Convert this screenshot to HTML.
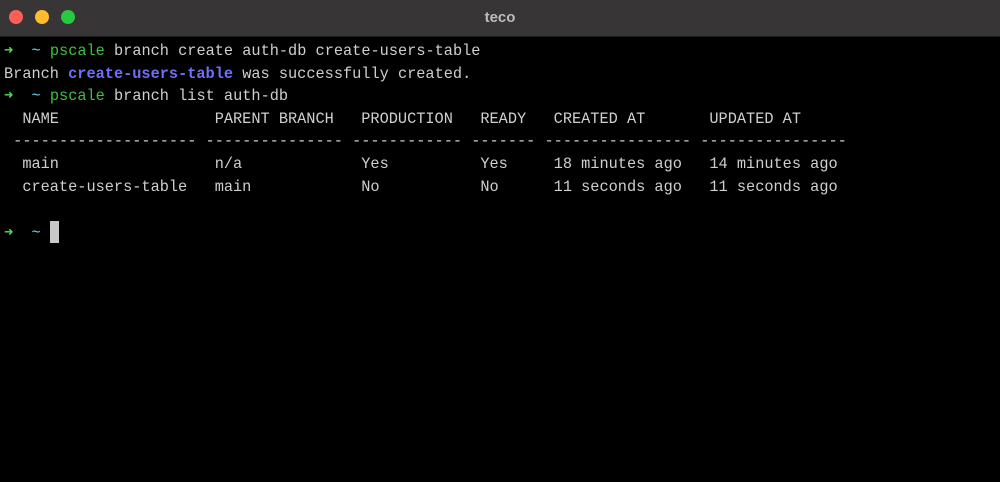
<!DOCTYPE html>
<html><head><style>
html,body{margin:0;padding:0;background:#000;width:1000px;height:482px;overflow:hidden}
.bar{height:36px;background:#383537;position:relative;border-bottom:1px solid #1a1a1a}
.d{position:absolute;top:10px;width:14px;height:14px;border-radius:50%}
.t{position:absolute;left:0;right:0;top:9px;text-align:center;color:#bdbcbd;font:bold 15px "Liberation Sans",sans-serif}
pre{margin:0;position:absolute;left:4px;top:40px;font:15.28px/22.6px "Liberation Mono",monospace;color:#cfcfcf}
.g{color:#4fe05a}.c{color:#5fd7e8}.p{color:#3cc23c}.b{color:#6f6ff8;font-weight:bold}
.cur{display:inline-block;width:9px;height:22px;background:#c8c8c8;vertical-align:-6px}
</style></head><body>
<div class="bar">
<div class="d" style="left:9px;background:#fe5f57"></div>
<div class="d" style="left:35px;background:#febc2e"></div>
<div class="d" style="left:61px;background:#28c840"></div>
<div class="t">teco</div>
</div>
<pre><span class="g">➜</span>  <span class="c">~</span> <span class="p">pscale</span> branch create auth-db create-users-table
Branch <span class="b">create-users-table</span> was successfully created.
<span class="g">➜</span>  <span class="c">~</span> <span class="p">pscale</span> branch list auth-db
  NAME                 PARENT BRANCH   PRODUCTION   READY   CREATED AT       UPDATED AT
 -------------------- --------------- ------------ ------- ---------------- ----------------
  main                 n/a             Yes          Yes     18 minutes ago   14 minutes ago
  create-users-table   main            No           No      11 seconds ago   11 seconds ago

<span class="g">➜</span>  <span class="c">~</span> <span class="cur"></span></pre>
</body></html>
